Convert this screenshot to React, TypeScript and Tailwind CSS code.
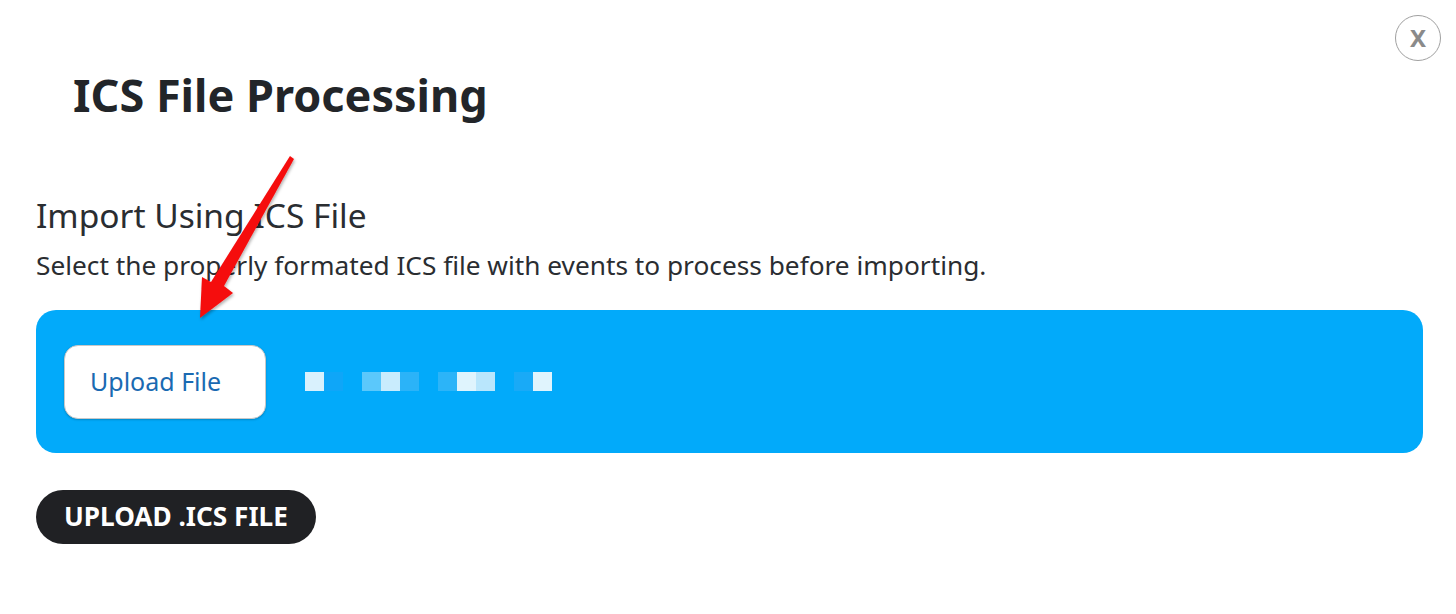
import React from "react";

const blocks = [
  "bg-[#d9f1fd]", "bg-[#0fa6f8]", "", "bg-[#5bc8fb]", "bg-[#c9ecfd]", "bg-[#2bb3f8]", "",
  "bg-[#2cb4f8]", "bg-[#dff4fd]", "bg-[#b9e6fc]", "", "bg-[#19aaf7]", "bg-[#e0f4fd]",
];

export default function App() {
  return (
    <div className="relative w-[1456px] h-[614px] bg-white text-[#222529] font-['Noto_Sans',sans-serif] overflow-hidden">
      {/* Close */}
      <button className="absolute top-[15px] left-[1395px] w-[46px] h-[46px] rounded-full border border-[#a0a0a0] flex items-center justify-center text-[#8a8a8a] text-[24px] font-bold leading-none">
        X
      </button>

      <div className="px-[36px] pt-[62px]">
        <h1 className="ml-[37px] text-[45px] font-bold leading-[66px]">ICS File Processing</h1>

        <h2 className="mt-[65px] text-[33.5px] leading-[44px] font-normal text-[#2a2d31]">Import Using ICS File</h2>
        <p className="mt-[10px] text-[26.25px] leading-[36px] text-[#2a2d31]">
          Select the properly formated ICS file with events to process before importing.
        </p>

        <div className="mt-[27px] w-[1387px] h-[143px] rounded-[20px] bg-[#02aafa] flex items-center px-[28px] gap-[39px]">
          <button className="w-[202px] h-[74px] rounded-[14px] bg-white border border-[#c8c8c8] shadow-[0_1px_2px_rgba(0,0,0,0.2)] text-[25px] text-[#1a6ab2] text-left pl-[25px]">
            Upload File
          </button>
          <div className="flex">
            {blocks.map((c, i) => (
              <div key={i} className={`w-[19px] h-[19px] ${c}`} />
            ))}
          </div>
        </div>

        <button className="mt-[37px] h-[54px] px-[28px] rounded-full bg-[#202124] text-white text-[26.2px] font-bold">
          UPLOAD .ICS FILE
        </button>
      </div>

      {/* annotation arrow */}
      <svg className="absolute left-0 top-0 pointer-events-none" width="1456" height="614">
        <defs>
          <filter id="sh" x="-20%" y="-20%" width="140%" height="140%">
            <feDropShadow dx="1" dy="2" stdDeviation="1.5" floodColor="#000" floodOpacity="0.3" />
          </filter>
        </defs>
        <polygon
          filter="url(#sh)"
          fill="#f50c0c"
          points="290,156 294,159 224,286 233,293 200,318 202,277 211,282"
        />
      </svg>
    </div>
  );
}
